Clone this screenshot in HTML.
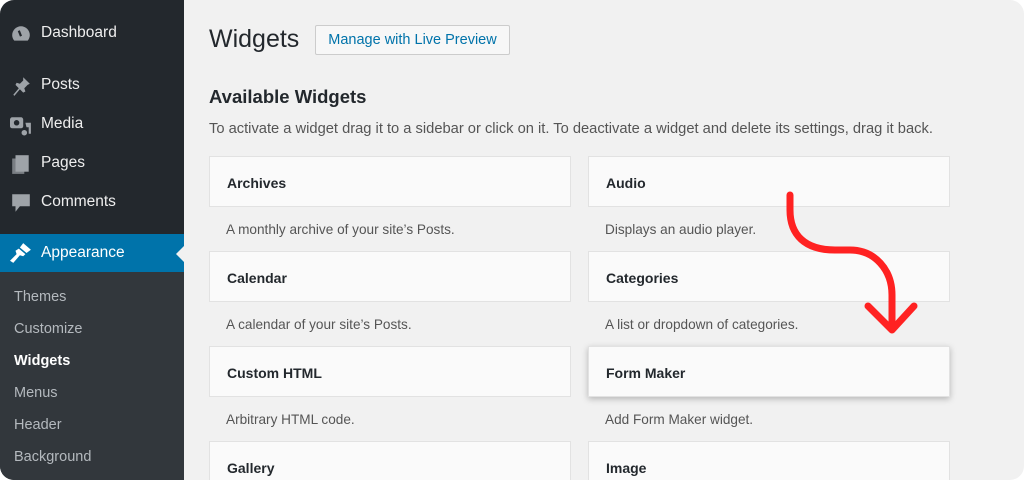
<!DOCTYPE html>
<html><head><meta charset="utf-8"><style>
*{margin:0;padding:0;box-sizing:border-box}
html,body{width:1024px;height:480px;background:#fff;overflow:hidden}
body{font-family:"Liberation Sans",sans-serif}
#wrap{position:absolute;left:0;top:0;width:1024px;height:480px;background:#f1f1f1;border-radius:14px;overflow:hidden}
#side{position:absolute;left:0;top:0;width:184px;height:480px;background:#23282d}
.mi{position:absolute;left:0;width:184px;color:#eee;font-size:15.5px}
.mi span{position:absolute;left:41px;top:0}
.ic{position:absolute;left:10px;top:-1px;width:22px;height:22px}
#app{position:absolute;left:0;top:234px;width:184px;height:38px;background:#0073aa}
#app:after{content:"";position:absolute;right:0;top:12px;border:8px solid transparent;border-right-color:#f1f1f1}
#sub{position:absolute;left:0;top:272px;width:184px;height:208px;background:#32373c}
.si{position:absolute;left:14px;color:#b4b9be;font-size:14.5px}
h1{position:absolute;left:209px;top:25px;font-size:25px;font-weight:400;color:#23282d}
.btn{position:absolute;left:315px;top:25px;width:195px;height:30px;border:1px solid #ccc;background:#f7f7f7;color:#0073aa;font-size:14.5px;line-height:28px;text-align:center;border-radius:2px}
h2{position:absolute;left:209px;top:86px;font-size:18.5px;font-weight:700;color:#23282d}
.desc{position:absolute;left:209px;top:121px;font-size:14.7px;color:#555;white-space:nowrap}
.w{position:absolute;width:362px;height:51px;background:#fafafa;border:1px solid #e2e2e2;font-size:14px;font-weight:700;color:#23282d;padding:18px 0 0 17px}
.wd{position:absolute;font-size:13.6px;color:#555}
</style></head><body><div id="wrap">
<div id="side">
<div class="mi" style="top:24px"><svg class="ic" viewBox="0 0 20 20"><path d="M10 3a8 8 0 0 0-8 8c0 2 .7 3.7 1.9 5h12.2A8 8 0 0 0 18 11a8 8 0 0 0-8-8z" fill="#9ea3a8"/><path d="M10 12l-2-5" stroke="#23282d" stroke-width="2"/></svg><span>Dashboard</span></div>
<div class="mi" style="top:76px"><svg class="ic" viewBox="0 0 20 20"><path d="M12 2l6 6-2 1-3 3 1 3-2 1-3-3-5 6-1-1 5-6-3-3 1-2 3 1 3-3z" fill="#9ea3a8"/></svg><span>Posts</span></div>
<div class="mi" style="top:115px"><svg class="ic" viewBox="0 0 20 20"><rect x="0" y="3" width="12" height="10" rx="2" fill="#9ea3a8"/><circle cx="6" cy="8" r="2.5" fill="#23282d"/><path d="M14 8h5v10h-2v-6h-2z" fill="#9ea3a8"/><circle cx="13" cy="17" r="2.5" fill="#9ea3a8"/></svg><span>Media</span></div>
<div class="mi" style="top:154px"><svg class="ic" viewBox="0 0 20 20"><rect x="2" y="5" width="11" height="14" fill="#9ea3a8" opacity=".7"/><rect x="5" y="2" width="12" height="15" fill="#9ea3a8"/></svg><span>Pages</span></div>
<div class="mi" style="top:193px"><svg class="ic" viewBox="0 0 20 20"><path d="M2 2h16v11H9l-4 5v-5H2z" fill="#9ea3a8"/></svg><span>Comments</span></div>
<div id="app"><div class="mi" style="top:10px;color:#fff"><svg class="ic" viewBox="0 0 20 20" style="top:-2px"><path d="M12 1l7 6-4 3-6-5zM8 6l6 5-2 2-3-1-6 7-3-2 6-6-1-3z" fill="#fff"/></svg><span>Appearance</span></div></div>
<div id="sub">
<div class="si" style="top:17px">Themes</div>
<div class="si" style="top:49px">Customize</div>
<div class="si" style="top:81px;color:#fff;font-weight:700">Widgets</div>
<div class="si" style="top:113px">Menus</div>
<div class="si" style="top:145px">Header</div>
<div class="si" style="top:177px">Background</div>
</div>
</div>
<h1>Widgets</h1>
<div class="btn">Manage with Live Preview</div>
<h2>Available Widgets</h2>
<div class="desc">To activate a widget drag it to a sidebar or click on it. To deactivate a widget and delete its settings, drag it back.</div>
<div class="w" style="left:209px;top:156px">Archives</div>
<div class="w" style="left:588px;top:156px">Audio</div>
<div class="wd" style="left:226px;top:222px">A monthly archive of your site’s Posts.</div>
<div class="wd" style="left:605px;top:222px">Displays an audio player.</div>
<div class="w" style="left:209px;top:251px">Calendar</div>
<div class="w" style="left:588px;top:251px">Categories</div>
<div class="wd" style="left:226px;top:317px">A calendar of your site’s Posts.</div>
<div class="wd" style="left:605px;top:317px">A list or dropdown of categories.</div>
<div class="w" style="left:209px;top:346px">Custom HTML</div>
<div class="w" style="left:588px;top:346px;box-shadow:0 2px 6px rgba(0,0,0,.25)">Form Maker</div>
<div class="wd" style="left:226px;top:412px">Arbitrary HTML code.</div>
<div class="wd" style="left:605px;top:412px">Add Form Maker widget.</div>
<div class="w" style="left:209px;top:441px">Gallery</div>
<div class="w" style="left:588px;top:441px">Image</div>
<svg style="position:absolute;left:0;top:0" width="1024" height="480"><path d="M790 195v15c0 25 15 40 45 40h15c25 0 42 20 42 45v33M868 306l24 24 22-24" fill="none" stroke="#f22" stroke-width="7" stroke-linecap="round" stroke-linejoin="round"/></svg>
</div></body></html>
